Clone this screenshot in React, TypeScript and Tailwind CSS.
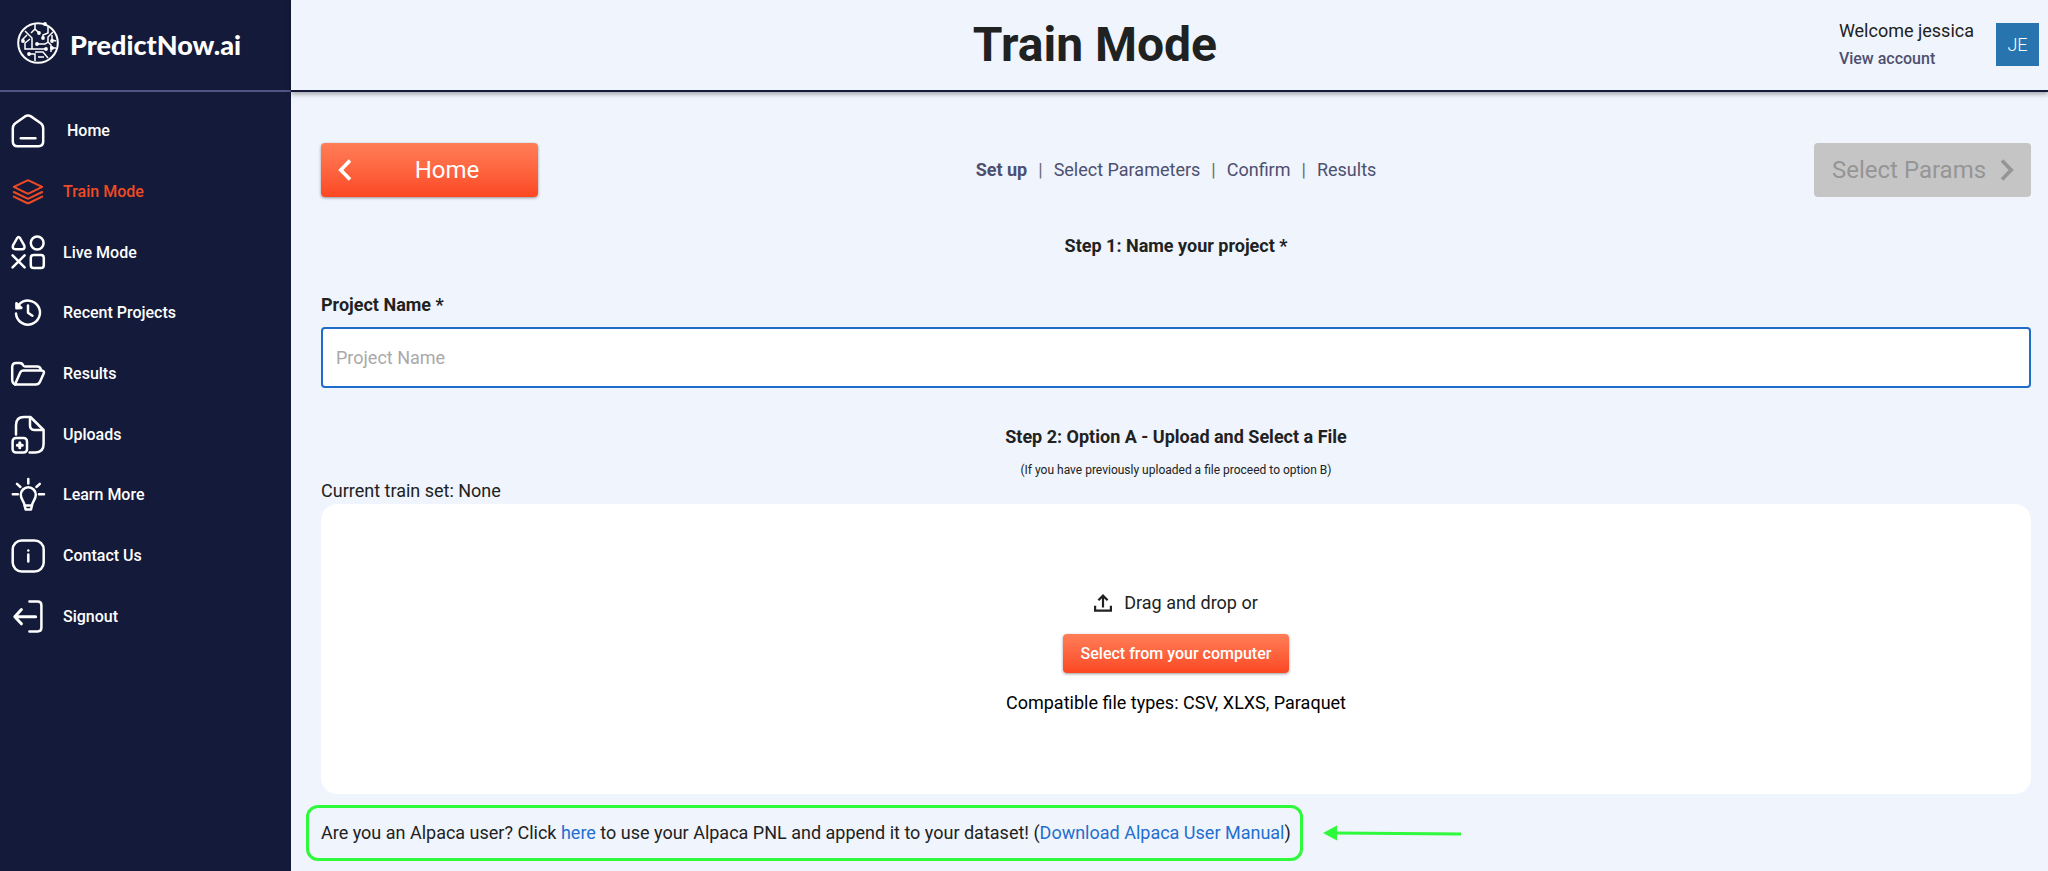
import type { ReactNode } from 'react';

interface NavItem {
  label: string;
  icon: ReactNode;
  active?: boolean;
}

const navItems: NavItem[] = [
  {
    label: 'Home',
    icon: (
      <>
        <path d="M4.8 17.5Q4.8 14 7.4 12.2L17 5.4Q20 3.4 23 5.4L32.8 12.2Q35.2 14 35.2 17.5V30.5Q35.2 35.2 30.5 35.2H9.5Q4.8 35.2 4.8 30.5Z" />
        <path d="M12.8 27.2H27.4" />
      </>
    ),
  },
  {
    label: 'Train Mode',
    active: true,
    icon: (
      <g strokeWidth="2.1">
        <path d="M19 8.6Q20 8.1 21 8.6L34.2 14.9L21 21.4Q20 21.9 19 21.4L5.8 14.9Z" />
        <path d="M5.8 20L19 26.4Q20 26.9 21 26.4L34.2 20" />
        <path d="M5.8 24.6L19 31Q20 31.5 21 31L34.2 24.6" />
      </g>
    ),
  },
  {
    label: 'Live Mode',
    icon: (
      <>
        <path d="M9.2 5Q10.6 3 12 5L16.2 12.4Q17.6 16.2 13.8 16.2H7.6Q3.8 16.2 5 12.4Z" />
        <circle cx="29.2" cy="10" r="6.4" />
        <path d="M4.6 22.4L16.6 34.4M16.6 22.4L4.6 34.4" />
        <rect x="22.8" y="22" width="13" height="13" rx="2.8" />
      </>
    ),
  },
  {
    label: 'Recent Projects',
    icon: (
      <>
        <path d="M8 20.6A12 12 0 1 0 11.4 11.2" />
        <path d="M20 12.6V19.8L24.4 22.8" />
        <path d="M8.4 10.2L13.4 15L8.4 15.2Z" fill="currentColor" />
      </>
    ),
  },
  {
    label: 'Results',
    icon: (
      <>
        <path d="M7 30.4Q4.4 29.6 4.2 26V13Q4.4 8.9 8 8.9H11.6Q14.4 8.9 15.2 11.4Q15.6 12.4 17 12.4H29Q32.6 12.4 33 16.2" />
        <path d="M7 30.6L12.2 18.6Q13.2 16.4 15.6 16.4H33.4Q37 16.6 35.6 19.8L32 27.8Q30.8 30.6 27.6 30.6Z" />
      </>
    ),
  },
  {
    label: 'Uploads',
    icon: (
      <>
        <path d="M8 19.6V10.2Q8 2 16 2H22.4L35.6 15V29Q35.6 37.4 27.4 37.4H21.6" />
        <path d="M22 2.4V10.6Q22 14.8 26.2 15H35" />
        <rect x="4.6" y="23" width="14.4" height="14.6" rx="3.4" />
        <path d="M11.8 27.8V32.8M9.3 30.3H14.3" strokeWidth="3" />
      </>
    ),
  },
  {
    label: 'Learn More',
    icon: (
      <>
        <path d="M16.6 30.6C16.4 26.4 12.8 25 12.8 19.8A7.5 7.5 0 0 1 27.8 19.8C27.8 25 24.2 26.4 24 30.6Z" />
        <path d="M16.8 31L17.6 34.6H23L23.8 31" />
        <path d="M20.3 4V8.4M4.8 19.2H9.8M31 19.2H36M9 8.8L12.4 12M31.8 8.8L28.4 12" />
      </>
    ),
  },
  {
    label: 'Contact Us',
    icon: (
      <>
        <rect x="4.7" y="4.4" width="31" height="31" rx="9" />
        <path d="M20.3 18.6V25.4M20.3 14.4V14.6" />
      </>
    ),
  },
  {
    label: 'Signout',
    icon: (
      <>
        <path d="M21.4 4.6H29.6Q33.4 4.6 33.4 8.4V30.8Q33.4 34.4 29.6 34.4H21.4" />
        <path d="M27.6 19.7H7M13.4 12.6L6.8 19.7L13.4 26.8" strokeWidth="3" />
      </>
    ),
  },
];

const steps = ['Set up', 'Select Parameters', 'Confirm', 'Results'];

function LogoMark() {
  return (
    <svg width="42" height="42" viewBox="0 0 42 42" fill="none" stroke="currentColor" strokeWidth="1.5" aria-hidden="true">
      <circle cx="21" cy="21" r="19.8" strokeWidth="2" />
      <path d="M18 2V7L22 11M18 7L14 11M8 9L15 16V27H8V21L13 17M5 18L10 13M31 5V11L26 13V17M36 10L31 15V20L28 22H20M31 20L34 23V30M39 19L35 18V13M15 27H29M39 26H35M12 32H18V39M18 30H26L31 36M21 35H27" />
      <g fill="currentColor" stroke="none">
        <circle cx="22" cy="11" r="1.9" />
        <circle cx="6" cy="19" r="1.9" />
        <circle cx="26" cy="16" r="1.9" />
        <circle cx="35" cy="19" r="1.9" />
        <circle cx="20" cy="22" r="1.9" />
        <circle cx="29" cy="27" r="1.9" />
        <circle cx="35" cy="26" r="1.9" />
        <circle cx="12" cy="32" r="1.9" />
        <circle cx="28" cy="2" r="1.9" />
      </g>
    </svg>
  );
}

function Chevron({ direction }: { direction: 'left' | 'right' }) {
  return (
    <svg width="14" height="22" viewBox="0 0 14 22" fill="none" stroke="currentColor" strokeWidth="3.6" aria-hidden="true">
      <path d={direction === 'left' ? 'M12 1.6L2.8 11L12 20.4' : 'M2 1.6L11.2 11L2 20.4'} />
    </svg>
  );
}

function Sidebar() {
  return (
    <aside className="w-[291px] shrink-0 bg-[#141a39] text-white">
      <div className="flex h-[92px] items-center gap-[11px] border-b-2 border-[#51557f] pb-1 pl-[17px]">
        <LogoMark />
        <span className="pt-1 font-['Lato',sans-serif] text-[27px] leading-8 font-black">PredictNow.ai</span>
      </div>
      <nav className="grid h-[555px] auto-rows-fr pt-[9px]">
        {navItems.map(({ label, icon, active }) => (
          <a
            key={label}
            href="#"
            className={`flex items-center gap-[15px] pl-2 text-base font-medium ${active ? 'text-[#f04a25]' : 'text-white'}`}
          >
            <svg
              width="40"
              height="40"
              viewBox="0 0 40 40"
              fill="none"
              stroke="currentColor"
              strokeWidth="2.5"
              strokeLinecap="round"
              strokeLinejoin="round"
              aria-hidden="true"
            >
              {icon}
            </svg>
            <span className={label === 'Home' ? 'ml-1' : ''}>{label}</span>
          </a>
        ))}
      </nav>
    </aside>
  );
}

function Header() {
  return (
    <header className="flex h-[92px] items-center border-b-2 border-[#141a39] pr-[9px] pb-px pl-[60px] shadow-[0_2px_5px_rgba(0,0,0,0.35)]">
      <h1 className="flex-1 text-center text-5xl font-bold">Train Mode</h1>
      <div className="flex items-center gap-[22px]">
        <div className="flex flex-col">
          <span className="text-lg leading-7">Welcome jessica</span>
          <a href="#" className="text-base leading-7 font-medium text-[#4d4f70]">
            View account
          </a>
        </div>
        <div className="flex size-[43px] items-center justify-center bg-[#2874ae] text-lg font-light text-white">JE</div>
      </div>
    </header>
  );
}

function StepTrail() {
  return (
    <ol className="flex gap-[11px] text-lg leading-6 text-[#4d4f70]">
      {steps.map((step, i) => (
        <li key={step} className={`flex gap-[11px] ${i === 0 ? 'font-bold' : ''}`}>
          {step}
          {i < steps.length - 1 && <span className="font-normal text-[#6b6b6b]">|</span>}
        </li>
      ))}
    </ol>
  );
}

function UploadPanel() {
  return (
    <section className="flex h-[290px] flex-col items-center justify-center rounded-2xl bg-white pt-2">
      <p className="flex items-center gap-3 text-lg leading-6">
        <svg width="18" height="18" viewBox="0 0 18 18" fill="none" stroke="currentColor" strokeWidth="2.2" aria-hidden="true">
          <path d="M9 13.6V2M4.4 6.2L9 1.6L13.6 6.2M1.1 11.8V16.6H16.9V11.8" />
        </svg>
        Drag and drop or
      </p>
      <button
        type="button"
        className="mt-[19px] h-[39px] w-[226px] rounded bg-linear-to-b from-[#ff7d57] to-[#fb4721] text-base font-medium text-white shadow-[0_1px_3px_rgba(0,0,0,0.4)]"
      >
        Select from your computer
      </button>
      <p className="mt-[18px] text-lg leading-6 text-black">Compatible file types: CSV, XLXS, Paraquet</p>
    </section>
  );
}

export default function App() {
  return (
    <div className="flex min-h-screen bg-[#f0f4fc] font-['Roboto',sans-serif] text-[#202221]">
      <Sidebar />
      <div className="min-w-0 flex-1">
        <Header />
        <main className="flex flex-col pt-[51px] pr-[17px] pl-[30px]">
          <div className="flex items-center justify-between">
            <button
              type="button"
              className="flex h-[54px] w-[217px] items-center rounded bg-linear-to-b from-[#ff7d57] to-[#fb4721] pr-4 pl-[17px] text-2xl text-white shadow-[0_1px_3px_rgba(0,0,0,0.4)]"
            >
              <Chevron direction="left" />
              <span className="flex-1 pl-5 text-center">Home</span>
            </button>
            <StepTrail />
            <button
              type="button"
              disabled
              className="flex h-[54px] w-[217px] items-center justify-between rounded bg-[#c5c5c5] pr-[17px] pl-[18px] text-2xl text-[#959595]"
            >
              Select Params
              <Chevron direction="right" />
            </button>
          </div>

          <h2 className="mt-[37px] text-center text-lg leading-6 font-bold">Step 1: Name your project *</h2>
          <label htmlFor="project-name" className="mt-[35px] text-lg leading-6 font-bold">
            Project Name *
          </label>
          <input
            id="project-name"
            type="text"
            placeholder="Project Name"
            className="mt-[10px] h-[61px] w-full rounded border-2 border-[#1f6cc9] bg-white px-[13px] text-lg outline-none placeholder:text-[#a9a9a9]"
          />

          <h2 className="mt-[37px] text-center text-lg leading-6 font-bold">Step 2: Option A - Upload and Select a File</h2>
          <p className="mt-[13px] text-center text-xs leading-4">(If you have previously uploaded a file proceed to option B)</p>
          <p className="mt-px mb-px text-lg leading-6">Current train set: None</p>
          <UploadPanel />

          <div className="mt-[11px] -ml-[15px] flex items-center gap-5">
            <p className="rounded-xl border-3 border-[#2ef93b] py-[13px] pr-[9px] pl-3 text-lg leading-6">
              Are you an Alpaca user? Click{' '}
              <a href="#" className="text-[#1f6fd0]">
                here
              </a>{' '}
              to use your Alpaca PNL and append it to your dataset! (
              <a href="#" className="text-[#1f6fd0]">
                Download Alpaca User Manual
              </a>
              )
            </p>
            <svg width="140" height="16" viewBox="0 0 140 16" className="text-[#2ef93b]" aria-hidden="true">
              <path d="M0 8L14 0.5V15.5Z" fill="currentColor" />
              <path d="M12 8L138 9" stroke="currentColor" strokeWidth="3" />
            </svg>
          </div>
        </main>
      </div>
    </div>
  );
}
